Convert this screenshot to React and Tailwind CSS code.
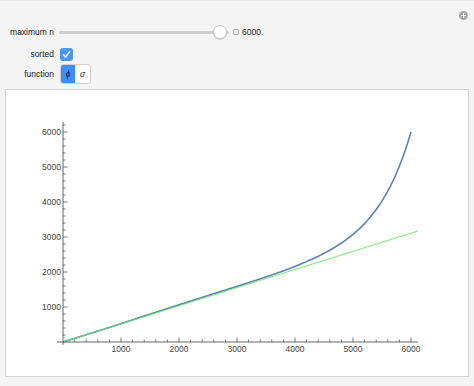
import React from "react";

const X = (u) => 63 + u * 0.058;
const Y = (v) => 343 - v * 0.035;

function bluePath() {
  const pts = [];
  for (let u = 0; u <= 6000; u += 30) {
    const off = u > 800 && u < 3900 ? 22 * Math.sin(((u - 800) / 3100) * Math.PI) : 0;
    const v = 0.52 * u + 2880 * Math.exp(0.0018 * (u - 6000)) + off;
    pts.push(`${X(u).toFixed(2)},${Y(v).toFixed(2)}`);
  }
  return "M" + pts.join(" L");
}

function Plot() {
  const xticks = [];
  for (let u = 200; u <= 6000; u += 200) {
    const major = u % 1000 === 0;
    xticks.push(
      <line key={"x" + u} x1={X(u)} x2={X(u)} y1={343} y2={major ? 338.5 : 340.5} stroke="#555" strokeWidth="0.8" />
    );
  }
  const yticks = [];
  for (let v = 200; v <= 6200; v += 200) {
    const major = v % 1000 === 0;
    yticks.push(
      <line key={"y" + v} x1={63} x2={major ? 67.5 : 65.5} y1={Y(v)} y2={Y(v)} stroke="#555" strokeWidth="0.8" />
    );
  }
  const labels = [1000, 2000, 3000, 4000, 5000, 6000];
  return (
    <svg width="464" height="288" viewBox="5 90 464 288" className="block">
      <path d={bluePath()} fill="none" stroke="#5e81b5" strokeWidth="1.6" strokeLinejoin="round" />
      <line x1={X(0)} y1={Y(0)} x2={X(6120)} y2={Y(6120 * 0.518)} stroke="#5ee85a" strokeWidth="1.2" strokeOpacity="0.8" />
      <line x1={57} x2={418} y1={343} y2={343} stroke="#555" strokeWidth="0.9" />
      <line x1={63} x2={63} y1={123} y2={346} stroke="#555" strokeWidth="0.9" />
      {xticks}
      {yticks}
      {labels.map((l) => (
        <text key={"lx" + l} x={X(l)} y={353} textAnchor="middle" fontSize="8.5" fill="#444" fontFamily="Liberation Sans, Arial, sans-serif">
          {l}
        </text>
      ))}
      {labels.map((l) => (
        <text key={"ly" + l} x={61} y={Y(l) + 3} textAnchor="end" fontSize="8.5" fill="#444" fontFamily="Liberation Sans, Arial, sans-serif">
          {l}
        </text>
      ))}
    </svg>
  );
}

export default function App() {
  return (
    <div
      className="w-[474px] h-[386px] bg-[#f4f4f4] flex flex-col relative border-t border-[#e6e6e6] overflow-hidden"
      style={{ fontFamily: "'Liberation Sans', Arial, sans-serif" }}
    >
      <div className="absolute right-[6px] top-[10px] w-[9px] h-[9px] rounded-full bg-[#a9a9a9] flex items-center justify-center">
        <div className="relative w-[5px] h-[5px]">
          <div className="absolute left-0 top-[2px] w-[5px] h-[1px] bg-white" />
          <div className="absolute left-[2px] top-0 w-[1px] h-[5px] bg-white" />
        </div>
      </div>

      <div className="flex items-center h-[16px] mt-[23px]">
        <div className="w-[55px] text-right pr-[1px] text-[8.5px] text-[#222] leading-none">maximum n</div>
        <div className="ml-[4px] w-[170px] h-[16px] relative flex items-center">
          <div className="w-full h-[3px] rounded-full bg-[#cfcfcf]" />
          <div className="absolute left-[154px] top-[1px] w-[14px] h-[14px] rounded-full bg-white border border-[#c4c4c4] shadow-[0_1px_1px_rgba(0,0,0,0.15)]" />
        </div>
        <div className="ml-[4px] w-[6px] h-[6px] border border-[#a8a8a8] rounded-[1px] bg-[#eee]" />
        <div className="ml-[3px] text-[8.5px] text-[#222] leading-none">6000.</div>
      </div>

      <div className="flex items-center h-[13px] mt-[8px]">
        <div className="w-[55px] text-right pr-[1px] text-[8.5px] text-[#222] leading-none">sorted</div>
        <div className="ml-[5px] w-[13px] h-[13px] rounded-[3px] bg-[#4a96f5] flex items-center justify-center">
          <svg width="9" height="9" viewBox="0 0 9 9">
            <path d="M1.5 4.8 L3.6 7 L7.6 1.6" fill="none" stroke="white" strokeWidth="1.4" strokeLinecap="round" strokeLinejoin="round" />
          </svg>
        </div>
      </div>

      <div className="flex items-center h-[20px] mt-[3px]">
        <div className="w-[55px] text-right pr-[1px] text-[8.5px] text-[#222] leading-none">function</div>
        <div className="ml-[5px] flex h-[20px] rounded-[3px] overflow-hidden border border-[#cfcfcf] bg-white">
          <div className="w-[14px] h-full bg-[#3d8ff5] flex items-center justify-center text-[8.5px] italic text-[#123] leading-none">ϕ</div>
          <div className="w-[15px] h-full flex items-center justify-center text-[8.5px] italic text-[#222] leading-none">σ</div>
        </div>
      </div>

      <div className="mt-[5px] ml-[5px] w-[464px] h-[288px] bg-white border border-[#d4d4d4]">
        <div className="-mt-px -ml-px">
          <Plot />
        </div>
      </div>
    </div>
  );
}
